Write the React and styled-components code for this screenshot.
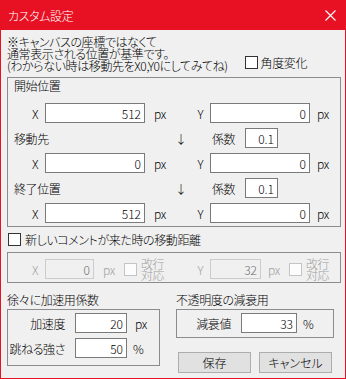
import React from "react";
import styled, { createGlobalStyle } from "styled-components";

const GlobalStyle = createGlobalStyle`
  html, body {
    margin: 0;
    padding: 0;
    background: #f0f0f0;
  }
  body {
    font-family: "Noto Sans CJK JP", "Noto Sans", sans-serif;
    font-size: 12px;
    font-weight: 300;
    color: #000;
    font-feature-settings: "palt" 1;
    letter-spacing: -0.4px;
  }
`;

const Window = styled.div`
  width: 346px;
  height: 379px;
  box-sizing: border-box;
  border: 1px solid #e81123;
  border-top: none;
  background: #f0f0f0;
  display: flex;
  flex-direction: column;
`;

const TitleBar = styled.div`
  height: 30px;
  flex: none;
  background: #e81123;
  color: #fff;
  display: flex;
  align-items: center;
  justify-content: space-between;
  padding: 0 9px 0 7px;
  font-size: 12px;
`;

const Body = styled.div`
  padding: 6px 4px 0 6px;
`;

const NoteRow = styled.div`
  display: flex;
  align-items: flex-end;
`;

const Notes = styled.div`
  flex: 1;
  line-height: 12px;
  white-space: nowrap;
`;

const CheckRow = styled.label`
  display: flex;
  align-items: center;
  gap: ${(p) => p.$gap || 4}px;
  height: 16px;
  margin: ${(p) => p.$m || "0"};
  white-space: nowrap;
`;

const Box = styled.span`
  width: 13px;
  height: 13px;
  flex: none;
  box-sizing: border-box;
  border: 1px solid ${(p) => (p.$disabled ? "#c4c4c4" : "#333")};
  background: ${(p) => (p.$disabled ? "#fcfcfc" : "#fff")};
`;

const Panel = styled.div`
  border: 1px solid #8c8c8c;
  display: flex;
  flex-direction: column;
  gap: 5px;
  padding: ${(p) => p.$pad || "0 0 3px"};
  margin-top: ${(p) => p.$mt || 0}px;
  box-sizing: border-box;
`;

const PanelTitle = styled.div`
  height: 20px;
  line-height: 16px;
  padding-left: 6px;
`;

const Row = styled.div`
  display: flex;
  align-items: center;
  height: 20px;
  white-space: nowrap;
  color: ${(p) => (p.$disabled ? "#a0a0a0" : "#000")};
`;

const AxisLabel = styled.span`
  width: ${(p) => p.$w}px;
  flex: none;
  box-sizing: border-box;
  display: flex;
  justify-content: flex-end;
  padding-right: ${(p) => (p.$pr ?? 7)}px;
`;

const Field = styled.input`
  width: ${(p) => p.$w}px;
  height: 20px;
  flex: none;
  box-sizing: border-box;
  margin: 0;
  border: 1px solid #7a7a7a;
  background: #fff;
  font: inherit;
  font-size: 12px;
  letter-spacing: 0;
  color: #000;
  text-align: right;
  padding: 0 3px 0 2px;
  outline: none;
  &:disabled {
    border-color: #cccccc;
    background: #f0f0f0;
    color: #6d6d6d;
  }
`;

const Unit = styled.span`
  width: ${(p) => (p.$w ? `${p.$w}px` : "auto")};
  flex: none;
  box-sizing: border-box;
  padding-left: ${(p) => (p.$pl ?? 9)}px;
`;

const RowTitle = styled.span`
  width: 167px;
  flex: none;
  padding-left: 6px;
  box-sizing: border-box;
`;

const Arrow = styled.span`
  width: 37px;
  flex: none;
`;

const CoefLabel = styled.span`
  width: 33px;
  flex: none;
`;

const Stacked = styled.span`
  font-size: 12px;
  line-height: 11.5px;
  width: 26px;
  flex: none;
  margin-left: 4px;
`;

const Columns = styled.div`
  display: grid;
  grid-template-columns: 153px 158px;
  column-gap: 16px;
  margin-top: 9px;
`;

const Column = styled.div`
  display: flex;
  flex-direction: column;
`;

const Heading = styled.div`
  height: 16px;
  line-height: 16px;
  margin-bottom: 1px;
  white-space: nowrap;
`;

const Buttons = styled.div`
  display: flex;
  gap: 8px;
  padding-left: 2px;
  margin-top: 14px;
`;

const Button = styled.button`
  width: 73px;
  height: 21px;
  margin: 0;
  padding: 0;
  box-sizing: border-box;
  border: 1px solid #adadad;
  background: #e1e1e1;
  font: inherit;
  font-size: 12px;
  color: #000;
`;

const CloseIcon = () => (
  <svg width="11" height="11" viewBox="0 0 11 11">
    <path d="M0.5 0.5 L10.5 10.5 M10.5 0.5 L0.5 10.5" stroke="#fff" strokeWidth="1.1" fill="none" />
  </svg>
);

const XYRow = ({ x, y }) => (
  <Row>
    <AxisLabel $w={37}>X</AxisLabel>
    <Field $w={100} value={x} readOnly />
    <Unit $w={44}>px</Unit>
    <AxisLabel $w={21}>Y</AxisLabel>
    <Field $w={100} value={y} readOnly />
    <Unit $pl={7}>px</Unit>
  </Row>
);

const CoefRow = ({ title }) => (
  <Row>
    <RowTitle>{title}</RowTitle>
    <Arrow>↓</Arrow>
    <CoefLabel>係数</CoefLabel>
    <Field $w={33} value="0.1" readOnly />
  </Row>
);

export default function App() {
  return (
    <>
      <GlobalStyle />
      <Window>
        <TitleBar>
          <span>カスタム設定</span>
          <CloseIcon />
        </TitleBar>
        <Body>
          <NoteRow>
            <Notes>
              ※キャンバスの座標ではなくて
              <br />
              通常表示される位置が基準です。
              <br />
              (わからない時は移動先をX0,Y0にしてみてね)
            </Notes>
            <CheckRow $gap={3} $m="0 34px 2px 0">
              <Box />
              角度変化
            </CheckRow>
          </NoteRow>

          <Panel $mt={5}>
            <PanelTitle>開始位置</PanelTitle>
            <XYRow x="512" y="0" />
            <CoefRow title="移動先" />
            <XYRow x="0" y="0" />
            <CoefRow title="終了位置" />
            <XYRow x="512" y="0" />
          </Panel>

          <CheckRow $m="4px 0 0 1px">
            <Box />
            新しいコメントが来た時の移動距離
          </CheckRow>

          <Panel $mt={5} $pad="6px 0 3px">
            <Row $disabled>
              <AxisLabel $w={37}>X</AxisLabel>
              <Field $w={49} value="0" disabled />
              <Unit $w={30}>px</Unit>
              <Box $disabled />
              <Stacked>改行<br />対応</Stacked>
              <AxisLabel $w={43}>Y</AxisLabel>
              <Field $w={51} value="32" disabled />
              <Unit $w={28} $pl={7}>px</Unit>
              <Box $disabled />
              <Stacked>改行<br />対応</Stacked>
            </Row>
          </Panel>

          <Columns>
            <Column>
              <Heading>徐々に加速用係数</Heading>
              <Panel $pad="3px 0 7px">
                <Row>
                  <AxisLabel $w={67} $pr={10}>加速度</AxisLabel>
                  <Field $w={52} value="20" readOnly />
                  <Unit $pl={8}>px</Unit>
                </Row>
                <Row>
                  <AxisLabel $w={67} $pr={10}>跳ねる強さ</AxisLabel>
                  <Field $w={52} value="50" readOnly />
                  <Unit $pl={6}>%</Unit>
                </Row>
              </Panel>
            </Column>
            <Column>
              <Heading>不透明度の減衰用</Heading>
              <Panel $pad="3px 0 4px">
                <Row>
                  <AxisLabel $w={64} $pr={10}>減衰値</AxisLabel>
                  <Field $w={56} value="33" readOnly />
                  <Unit $pl={6}>%</Unit>
                </Row>
              </Panel>
              <Buttons>
                <Button>保存</Button>
                <Button>キャンセル</Button>
              </Buttons>
            </Column>
          </Columns>
        </Body>
      </Window>
    </>
  );
}
